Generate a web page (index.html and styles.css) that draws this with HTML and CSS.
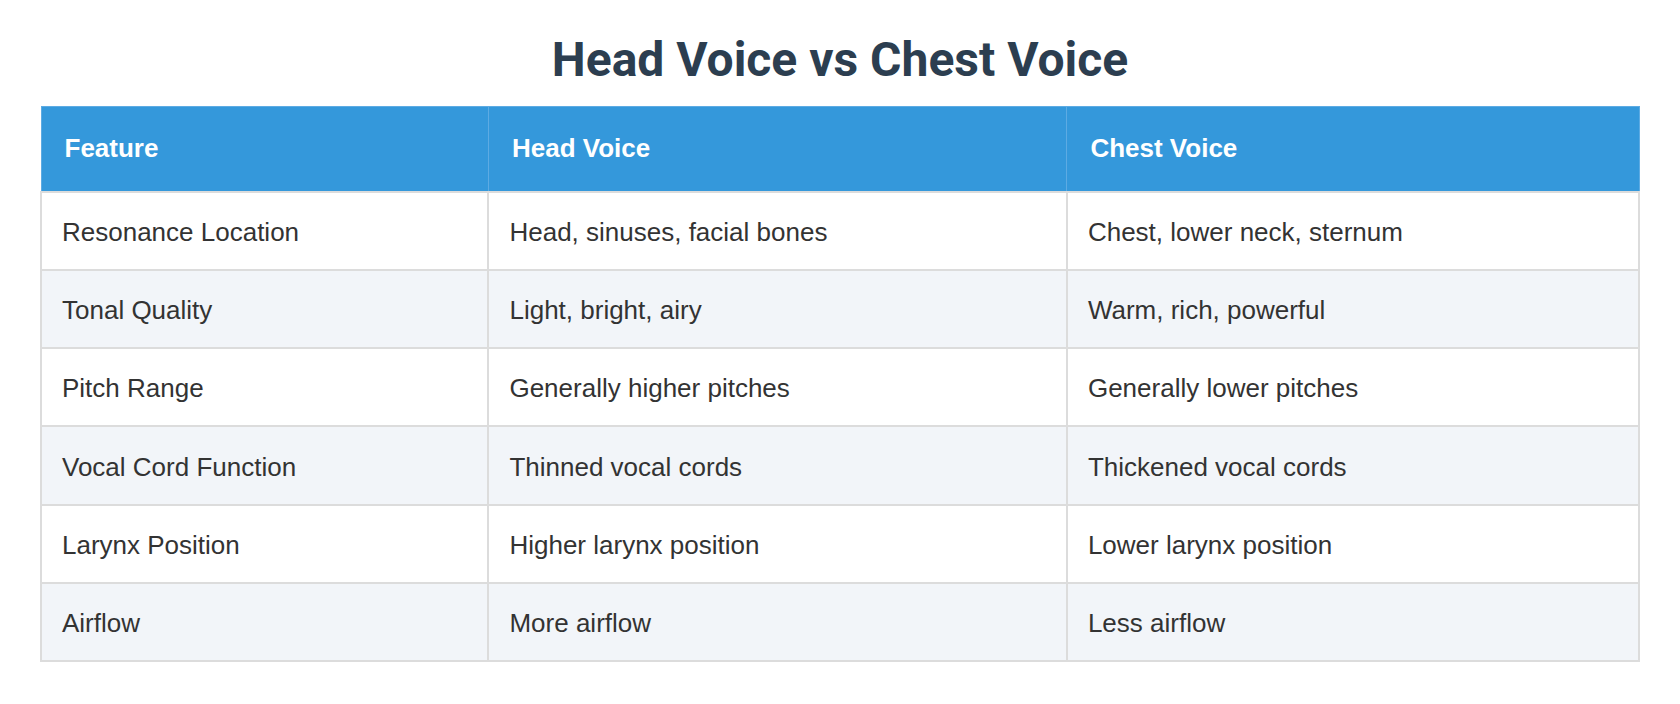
FILE: index.html
```html
<!DOCTYPE html>
<html lang="en">
<head>
<meta charset="utf-8">
<title>Head Voice vs Chest Voice</title>
<link rel="stylesheet" href="styles.css">
</head>
<body>
<div class="page">
  <h1 class="title">Head Voice vs Chest Voice</h1>
  <table class="compare">
    <thead>
      <tr>
        <th class="c1">Feature</th>
        <th class="c2">Head Voice</th>
        <th class="c3">Chest Voice</th>
      </tr>
    </thead>
    <tbody>
      <tr><td>Resonance Location</td><td>Head, sinuses, facial bones</td><td>Chest, lower neck, sternum</td></tr>
      <tr><td>Tonal Quality</td><td>Light, bright, airy</td><td>Warm, rich, powerful</td></tr>
      <tr><td>Pitch Range</td><td>Generally higher pitches</td><td>Generally lower pitches</td></tr>
      <tr><td>Vocal Cord Function</td><td>Thinned vocal cords</td><td>Thickened vocal cords</td></tr>
      <tr><td>Larynx Position</td><td>Higher larynx position</td><td>Lower larynx position</td></tr>
      <tr><td>Airflow</td><td>More airflow</td><td>Less airflow</td></tr>
    </tbody>
  </table>
</div>
</body>
</html>
```

FILE: styles.css
```css
html, body {
  margin: 0;
  padding: 0;
  background: #ffffff;
}

.page {
  padding: 31px 40px 0 40px;
  font-family: "Liberation Sans", Arial, sans-serif;
}

.title {
  margin: 0 0 18px 0;
  text-align: center;
  font-family: Roboto, "Liberation Sans", sans-serif;
  font-weight: 700;
  font-size: 48px;
  color: #2c3e50;
}

.compare {
  width: 100%;
  border-collapse: collapse;
  table-layout: fixed;
  font-size: 26px;
}

.compare th.c1 { width: 28%; }
.compare th.c2 { width: 36.2%; }
.compare th.c3 { width: 35.8%; }

.compare th {
  height: 85px;
  box-sizing: border-box;
  padding: 0 23px;
  text-align: left;
  background: #3498db;
  color: #ffffff;
  font-weight: 700;
  border: 1px solid #5dabe3;
}

.compare td {
  height: 78.3px;
  box-sizing: border-box;
  padding: 3px 20px 0 20px;
  color: #333333;
  border: 2px solid #dcdcdc;
}

.compare tbody tr:nth-child(odd) { background: #ffffff; }
.compare tbody tr:nth-child(even) { background: #f2f5f9; }
```
